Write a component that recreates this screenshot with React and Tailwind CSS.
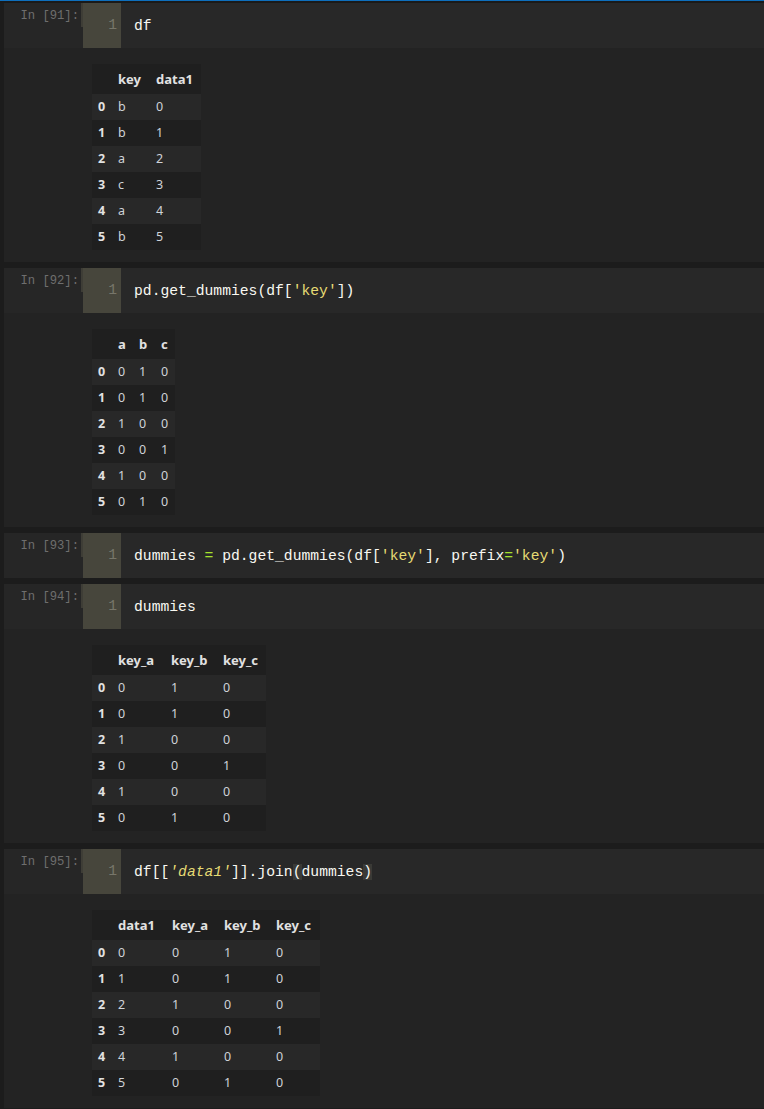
import React from "react";

const mono = { fontFamily: '"Liberation Mono", "DejaVu Sans Mono", monospace' };
const sans = { fontFamily: '"Noto Sans", "Open Sans", sans-serif' };

const W = ({ children }) => <span className="text-[#f8f8f2]">{children}</span>;
const S = ({ children, italic }) => (
  <span className={italic ? "text-[#e6db74] italic" : "text-[#e6db74]"}>{children}</span>
);
const Op = ({ children }) => <span className="text-[#a6e22e]">{children}</span>;
const Match = ({ children }) => (
  <span className="bg-[#3a3a36] text-[#f8f8f2]">{children}</span>
);

const cells = [
  {
    n: 91,
    code: <W>df</W>,
    table: {
      widths: [20, 38, 51],
      cols: ["key", "data1"],
      rows: [
        ["b", "0"],
        ["b", "1"],
        ["a", "2"],
        ["c", "3"],
        ["a", "4"],
        ["b", "5"],
      ],
    },
  },
  {
    n: 92,
    code: (
      <>
        <W>pd.get_dummies(df[</W>
        <S>'key'</S>
        <W>])</W>
      </>
    ),
    table: {
      widths: [20, 21, 22, 20],
      cols: ["a", "b", "c"],
      rows: [
        ["0", "1", "0"],
        ["0", "1", "0"],
        ["1", "0", "0"],
        ["0", "0", "1"],
        ["1", "0", "0"],
        ["0", "1", "0"],
      ],
    },
  },
  {
    n: 93,
    code: (
      <>
        <W>dummies </W>
        <Op>=</Op>
        <W> pd.get_dummies(df[</W>
        <S>'key'</S>
        <W>], prefix</W>
        <Op>=</Op>
        <S>'key'</S>
        <W>)</W>
      </>
    ),
  },
  {
    n: 94,
    code: <W>dummies</W>,
    table: {
      widths: [20, 53, 52, 49],
      cols: ["key_a", "key_b", "key_c"],
      rows: [
        ["0", "1", "0"],
        ["0", "1", "0"],
        ["1", "0", "0"],
        ["0", "0", "1"],
        ["1", "0", "0"],
        ["0", "1", "0"],
      ],
    },
  },
  {
    n: 95,
    code: (
      <>
        <W>df[[</W>
        <S italic>'data1'</S>
        <W>]].join</W>
        <Match>(</Match>
        <W>dummies</W>
        <Match>)</Match>
      </>
    ),
    table: {
      widths: [20, 54, 52, 52, 50],
      cols: ["data1", "key_a", "key_b", "key_c"],
      rows: [
        ["0", "0", "1", "0"],
        ["1", "0", "1", "0"],
        ["2", "1", "0", "0"],
        ["3", "0", "0", "1"],
        ["4", "1", "0", "0"],
        ["5", "0", "1", "0"],
      ],
    },
  },
];

const DataFrame = ({ widths, cols, rows }) => (
  <table className="border-collapse" style={sans}>
    <colgroup>
      {widths.map((w, i) => (
        <col key={i} style={{ width: w }} />
      ))}
    </colgroup>
    <thead>
      <tr className="h-[30px] bg-[#1f1f1f]">
        <th />
        {cols.map((c) => (
          <th key={c} className="pl-[6px] pt-[1px] text-left text-[13px] font-bold text-[#e2e2e2]">
            {c}
          </th>
        ))}
      </tr>
    </thead>
    <tbody>
      {rows.map((r, i) => (
        <tr key={i} className={i % 2 === 0 ? "h-[26px] bg-[#282828]" : "h-[26px] bg-[#1f1f1f]"}>
          <th className="pl-[6px] pt-[1px] text-left text-[12.5px] font-bold text-[#e2e2e2]">{i}</th>
          {r.map((v, j) => (
            <td key={j} className="pl-[6px] pt-[1px] text-left text-[12.5px] text-[#cfd3d8]">
              {v}
            </td>
          ))}
        </tr>
      ))}
    </tbody>
  </table>
);

const Cell = ({ n, code, table }) => (
  <div className="ml-1 bg-[#232323]">
    <div className="flex h-[45px] bg-[#282828]">
      <div
        className="w-[79px] shrink-0 bg-[#262626] pr-[4px] pt-[5px] text-right text-[12.2px] leading-[16px] text-[#6e6e6e]"
        style={mono}
      >
        In [{n}]:
      </div>
      <div className="relative w-[38px] shrink-0 bg-[#47463c]">
        <div className="absolute -left-[2px] top-0 h-[24px] w-[2px] bg-[#3e3d36]" />
        <div
          className="pr-[4px] pt-[12px] text-right text-[14.7px] leading-[20px] text-[#77766a]"
          style={mono}
        >
          1
        </div>
      </div>
      <div className="pl-[13px] pt-[13px] text-[14.7px] leading-[20px] whitespace-pre" style={mono}>
        {code}
      </div>
    </div>
    {table && (
      <div className="pb-[12px] pl-[88px] pt-[16px]">
        <DataFrame {...table} />
      </div>
    )}
  </div>
);

export default function App() {
  return (
    <div className="min-h-screen w-[764px] bg-[#1c1c1c]">
      <div className="h-px bg-[#0e6fbd]" />
      <div className="h-[2px] bg-[#1a1a1a]" />
      <div className="flex flex-col gap-[6px]">
        {cells.map((c) => (
          <Cell key={c.n} {...c} />
        ))}
      </div>
    </div>
  );
}
